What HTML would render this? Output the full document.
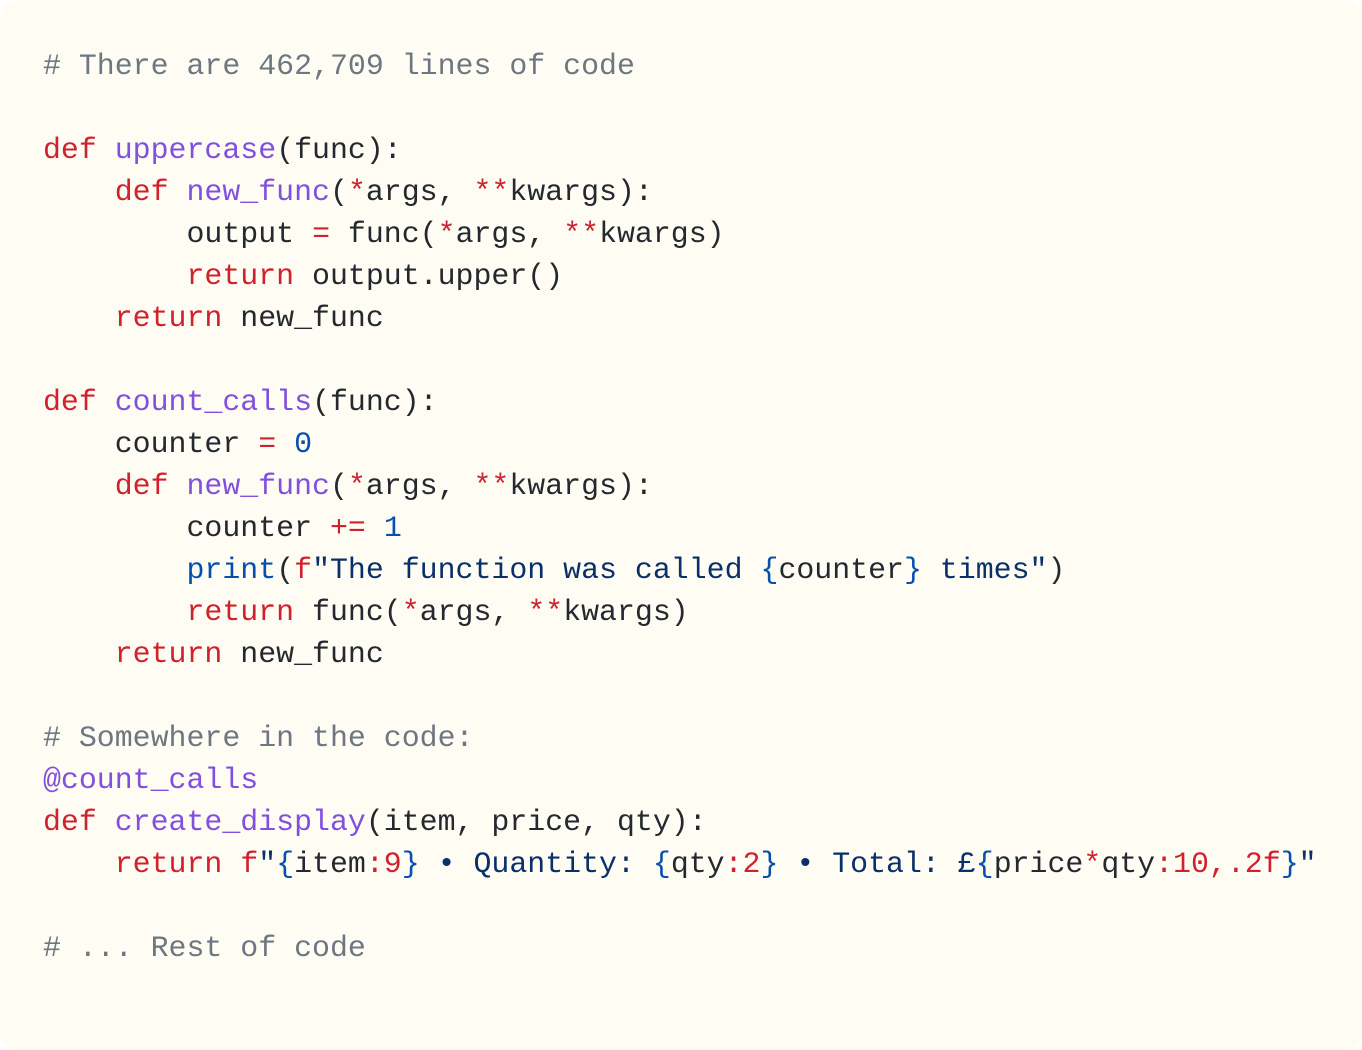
<!DOCTYPE html>
<html><head><style>
html,body{margin:0;padding:0;background:#fff;}
.box{position:absolute;left:0;top:0;width:1362px;height:1050px;background:#fffcf4;border-radius:18px;}
pre{margin:0;position:absolute;left:43px;top:45px;font-family:"Liberation Mono",monospace;font-size:29.9px;line-height:42px;color:#24292f;}
.c{color:#6e7781}.k{color:#cf222e}.f{color:#8250df}.n{color:#0550ae}.s{color:#0a3069}
</style></head><body><div class="box"><pre><span class="c"># There are 462,709 lines of code</span>

<span class="k">def</span> <span class="f">uppercase</span>(func):
    <span class="k">def</span> <span class="f">new_func</span>(<span class="k">*</span>args, <span class="k">**</span>kwargs):
        output <span class="k">=</span> func(<span class="k">*</span>args, <span class="k">**</span>kwargs)
        <span class="k">return</span> output.upper()
    <span class="k">return</span> new_func

<span class="k">def</span> <span class="f">count_calls</span>(func):
    counter <span class="k">=</span> <span class="n">0</span>
    <span class="k">def</span> <span class="f">new_func</span>(<span class="k">*</span>args, <span class="k">**</span>kwargs):
        counter <span class="k">+=</span> <span class="n">1</span>
        <span class="n">print</span>(<span class="k">f</span><span class="s">"The function was called </span><span class="n">{</span>counter<span class="n">}</span><span class="s"> times"</span>)
        <span class="k">return</span> func(<span class="k">*</span>args, <span class="k">**</span>kwargs)
    <span class="k">return</span> new_func

<span class="c"># Somewhere in the code:</span>
<span class="f">@count_calls</span>
<span class="k">def</span> <span class="f">create_display</span>(item, price, qty):
    <span class="k">return</span> <span class="k">f</span><span class="s">"</span><span class="n">{</span>item<span class="k">:9</span><span class="n">}</span><span class="s"> • Quantity: </span><span class="n">{</span>qty<span class="k">:2</span><span class="n">}</span><span class="s"> • Total: £</span><span class="n">{</span>price<span class="k">*</span>qty<span class="k">:10,.2f</span><span class="n">}</span><span class="s">"</span>

<span class="c"># ... Rest of code</span>
</pre></div></body></html>
